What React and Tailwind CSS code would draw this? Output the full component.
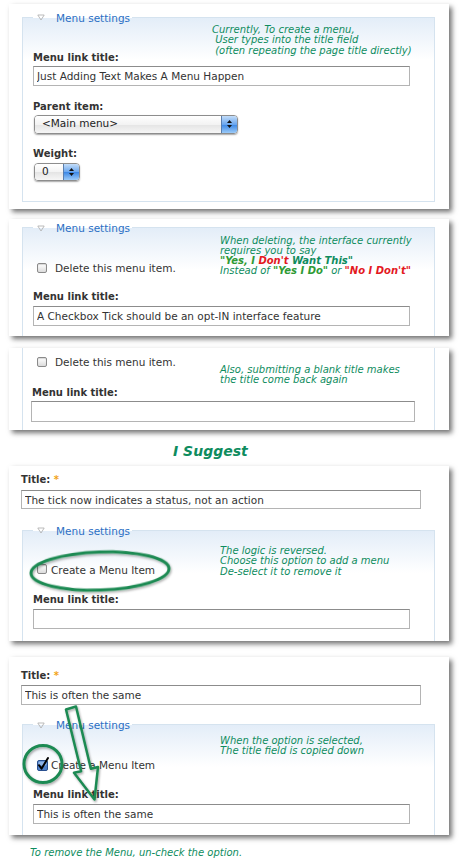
import React from 'react';

// little aqua-style pieces of the old admin form
function Tri({ up = false }) {
  return (
    <svg width="5" height="3" viewBox="0 0 5 3">
      <path d={up ? 'M0 3 L5 3 L2.5 0 Z' : 'M0 0 L5 0 L2.5 3 Z'} fill="#111" />
    </svg>
  );
}

function AquaSelect({ className = '', label }) {
  return (
    <div className={`ml-[1px] flex overflow-hidden rounded-[4px] border border-[#8d8d8d] shadow-[0_1px_1.5px_rgba(0,0,0,0.35)] ${className}`}>
      <div className="flex flex-1 items-center bg-[linear-gradient(#ffffff,#f3f3f3_50%,#e4e4e4_51%,#f6f6f6)] pl-[7px] text-[10.5px] text-[#222]">
        {label}
      </div>
      <div className="flex w-[16px] flex-col items-center justify-center gap-[2px] border-l border-[#5a7eae] bg-[linear-gradient(#c3ddf9,#6aa6ee_50%,#3a86e5_51%,#9ccbf8)]">
        <Tri up />
        <Tri />
      </div>
    </div>
  );
}

function Checkbox({ checked = false }) {
  if (checked) {
    return (
      <svg width="12" height="14" viewBox="0 0 12 14" className="overflow-visible">
        <rect x="0.5" y="3.5" width="10" height="10" rx="1.5" fill="#4f80c8" stroke="#29508f" />
        <rect x="1.5" y="4.5" width="8" height="4" rx="1" fill="#8fb4e6" />
        <path d="M2 8.2 L4.6 11.6 L11 1" fill="none" stroke="#000" strokeWidth="2" strokeLinecap="round" strokeLinejoin="round" />
      </svg>
    );
  }
  return (
    <span className="block h-[10px] w-[10px] rounded-[2px] border border-[#8a8a8a] bg-[linear-gradient(#ffffff,#dcdcdc)] shadow-[inset_0_1px_1px_rgba(0,0,0,0.15)]" />
  );
}

function Legend() {
  return (
    <legend className="pl-[4px] pr-[2px] text-[10.5px] leading-[14px] text-[#2b6fc4]">
      <span className="inline-flex h-[14px] items-center">
        <svg width="8" height="7" viewBox="0 0 8 7" className="mr-[11px]">
          <path d="M0.8 1 L7.2 1 L4 6 Z" fill="none" stroke="#b3b3b3" strokeWidth="0.9" />
        </svg>
        Menu settings
      </span>
    </legend>
  );
}

function Label({ className = '', children }) {
  return (
    <div className={`text-[10px] font-bold leading-[14px] text-[#333] ${className}`}>{children}</div>
  );
}

function TextField({ className = '', value = '' }) {
  return (
    <input
      readOnly
      value={value}
      className={`block border border-[#b4b4b4] border-t-[#8c8c8c] bg-white px-[3px] text-[10.5px] text-[#333] outline-none ${className}`}
    />
  );
}

function Note({ className = '', children }) {
  return (
    <div className={`pointer-events-none absolute whitespace-pre font-['Comic_Sans_MS','DejaVu_Sans',sans-serif] text-[10px] italic leading-[10.3px] text-[#0e8c5e] ${className}`}>
      {children}
    </div>
  );
}

const card = 'relative ml-[9px] w-[440px] bg-white shadow-[3px_3px_5px_rgba(0,0,0,0.55)]';
const fieldset = 'ml-[13px] mr-[14px] border border-[#d5e3ef] bg-[linear-gradient(#e3edf8,#ffffff_42px)] px-[10px]';

export default function App() {
  return (
    <div className="min-h-screen bg-white pt-[4px] pb-[10px] font-['Lucida_Grande','DejaVu_Sans',sans-serif] text-[#333]">
      {/* current behaviour: typing a title creates the menu */}
      <section className={`${card} pt-[6px] pb-[7px]`}>
        <fieldset className={`${fieldset} pb-[20px]`}>
          <Legend />
          <Label className="mt-[26px]">Menu link title:</Label>
          <TextField className="mt-[1px] h-[20px] w-[377px]" value="Just Adding Text Makes A Menu Happen" />
          <Label className="mt-[14px]">Parent item:</Label>
          <AquaSelect className="mt-[1px] h-[19px] w-[204px]" label="<Main menu>" />
          <Label className="mt-[13px]">Weight:</Label>
          <AquaSelect className="mt-[2px] h-[18px] w-[46px]" label="0" />
        </fieldset>
        <Note className="left-[203px] top-[21px]">
          {'Currently, To create a menu,\n User types into the title field\n (often repeating the page title directly)'}
        </Note>
      </section>

      {/* delete checkbox */}
      <section className={`${card} mt-[10px] overflow-hidden pt-[2px]`}>
        <fieldset className={`${fieldset} border-b-0 pb-[10px]`}>
          <Legend />
          <div className="mt-[27px] flex h-[14px] items-center">
            <span className="ml-[4px] mb-[3px]"><Checkbox /></span>
            <span className="ml-[8px] text-[10.5px]">Delete this menu item.</span>
          </div>
          <Label className="mt-[14px]">Menu link title:</Label>
          <TextField className="mt-[2px] h-[20px] w-[377px]" value="A Checkbox Tick should be an opt-IN interface feature" />
        </fieldset>
        <Note className="left-[211px] top-[17px]">
          {'When deleting, the interface currently\nrequires you to say\n'}
          <span className="font-bold">
            <span className="text-[#2f9b35]">"Yes, I </span>
            <span className="text-[#e3191f]">Don't</span>
            {' Want This"'}
          </span>
          {'\nInstead of '}
          <span className="font-bold text-[#2f9b35]">"Yes I Do"</span>
          {' or '}
          <span className="font-bold text-[#e3191f]">"No I Don't"</span>
        </Note>
      </section>

      {/* blank title */}
      <section className={`${card} mt-[12px]`}>
        <fieldset className="ml-[13px] mr-[14px] border-x border-[#d5e3ef] pl-[9px] pr-[10px] pt-[8px] pb-[8px]">
          <div className="flex h-[14px] items-center">
            <span className="ml-[5px] mb-[3px]"><Checkbox /></span>
            <span className="ml-[8px] text-[10.5px]">Delete this menu item.</span>
          </div>
          <Label className="mt-[16px]">Menu link title:</Label>
          <TextField className="-ml-[1px] mt-[1px] h-[21px] w-[384px]" />
        </fieldset>
        <Note className="left-[211px] top-[17px]">
          {'Also, submitting a blank title makes\nthe title come back again'}
        </Note>
      </section>

      <div className="mt-[12px] pl-[173px] font-['Comic_Sans_MS','DejaVu_Sans',sans-serif] text-[14px] font-bold italic leading-[18px] text-[#0e8c5e]">
        I Suggest
      </div>

      {/* suggestion: unchecked */}
      <section className={`${card} mt-[6px] overflow-hidden pt-[7px]`}>
        <div className="pl-[12px]">
          <Label>
            Title: <span className="text-[#f2a419]">*</span>
          </Label>
          <TextField className="mt-[3px] h-[19px] w-[400px]" value="The tick now indicates a status, not an action" />
        </div>
        <fieldset className={`${fieldset} mt-[14px] border-b-0 pb-[12px]`}>
          <Legend />
          <div className="mt-[26px] flex h-[14px] items-center">
            <span className="ml-[4px] mb-[3px]"><Checkbox /></span>
            <span className="ml-[4px] text-[10.5px]">Create a Menu Item</span>
          </div>
          <Label className="mt-[15px]">Menu link title:</Label>
          <TextField className="mt-[2px] h-[20px] w-[377px]" />
        </fieldset>
        <Note className="left-[211px] top-[80px]">
          {'The logic is reversed.\nChoose this option to add a menu\nDe-select it to remove it'}
        </Note>
        <svg className="pointer-events-none absolute left-0 top-0" width="440" height="174" viewBox="0 0 440 174">
          <defs>
            <filter id="inkShadow" x="-10%" y="-30%" width="120%" height="160%">
              <feDropShadow dx="1" dy="1.5" stdDeviation="1" floodColor="#000" floodOpacity="0.35" />
            </filter>
          </defs>
          <ellipse cx="91" cy="105" rx="69" ry="19" transform="rotate(-2 91 105)" fill="none" stroke="#1d8a52" strokeWidth="3" filter="url(#inkShadow)" />
        </svg>
      </section>

      {/* suggestion: checked, title copied */}
      <section className={`${card} mt-[16px] overflow-hidden pt-[12px]`}>
        <div className="pl-[12px]">
          <Label>
            Title: <span className="text-[#f2a419]">*</span>
          </Label>
          <TextField className="mt-[2px] h-[20px] w-[400px]" value="This is often the same" />
        </div>
        <fieldset className={`${fieldset} mt-[13px] border-b-0 pb-[11px]`}>
          <Legend />
          <div className="mt-[27px] flex h-[14px] items-center">
            <span className="ml-[4px] mb-[5px]"><Checkbox checked /></span>
            <span className="ml-[2px] text-[10.5px]">Create a Menu Item</span>
          </div>
          <Label className="mt-[15px]">Menu link title:</Label>
          <TextField className="mt-[2px] h-[20px] w-[377px]" value="This is often the same" />
        </fieldset>
        <Note className="left-[211px] top-[79px]">
          {'When the option is selected,\nThe title field is copied down'}
        </Note>
        <svg className="pointer-events-none absolute left-0 top-0" width="440" height="178" viewBox="0 0 440 178">
          <defs>
            <filter id="inkShadow2" x="-30%" y="-30%" width="160%" height="160%">
              <feDropShadow dx="1" dy="1.5" stdDeviation="1" floodColor="#000" floodOpacity="0.35" />
            </filter>
          </defs>
          <ellipse cx="34" cy="107" rx="19" ry="18.5" fill="none" stroke="#1d8a52" strokeWidth="3" filter="url(#inkShadow2)" />
          <path
            d="M67 49.5 L81.9 111.8 L89 110 L85.5 142.5 L65 115.8 L72.1 114.2 L57 52.5 Z"
            fill="none"
            stroke="#1d8a52"
            strokeWidth="2.5"
            strokeLinejoin="round"
            filter="url(#inkShadow2)"
          />
        </svg>
      </section>

      <div className="mt-[12px] pl-[30px] font-['Comic_Sans_MS','DejaVu_Sans',sans-serif] text-[10px] italic leading-[12px] text-[#0e8c5e]">
        To remove the Menu, un-check the option.
      </div>
    </div>
  );
}
